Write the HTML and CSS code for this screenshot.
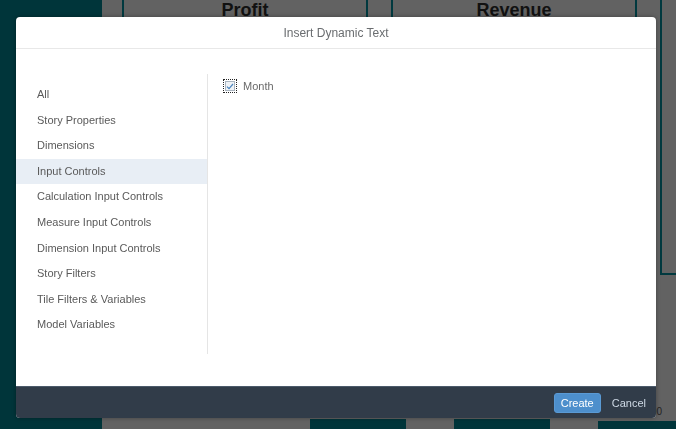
FILE: index.html
```html
<!DOCTYPE html>
<html lang="en">

<head>
  <meta charset="UTF-8">
  <meta name="viewport" content="width=device-width, initial-scale=1.0">
  <title>Insert Dynamic Text</title>
  <link rel="stylesheet" href="styles.css">
</head>

<body>
  <div class="story">
    <div class="side"></div>
    <div class="canvas">
      <div class="tiles-top">
        <div class="tile"><h2>Profit</h2></div>
        <div class="tile"><h2>Revenue</h2></div>
        <div class="tile tile-short"></div>
      </div>
      <div class="axis-row">
        <span class="axis-label">1,000</span>
      </div>
      <div class="tiles-bottom">
        <div class="block"></div>
        <div class="block"></div>
        <div class="block block-wide"></div>
      </div>
    </div>
  </div>

  <div class="dialog">
    <div class="dialog-header">Insert Dynamic Text</div>
    <div class="dialog-body">
      <ul class="nav">
        <li>All</li>
        <li>Story Properties</li>
        <li>Dimensions</li>
        <li class="selected">Input Controls</li>
        <li>Calculation Input Controls</li>
        <li>Measure Input Controls</li>
        <li>Dimension Input Controls</li>
        <li>Story Filters</li>
        <li>Tile Filters &amp; Variables</li>
        <li>Model Variables</li>
      </ul>
      <div class="options">
        <label class="option">
          <span class="focus-ring">
            <span class="check">
              <svg width="8" height="7" viewBox="0 0 8 7">
                <path d="M1 3.6 L3 5.6 L7 1" fill="none" stroke="#4a84bd" stroke-width="1.2" />
              </svg>
            </span>
          </span>
          Month
        </label>
      </div>
    </div>
    <div class="dialog-footer">
      <button class="btn btn-primary">Create</button>
      <button class="btn btn-plain">Cancel</button>
    </div>
  </div>
</body>

</html>
```

FILE: styles.css
```css
* {
  box-sizing: border-box;
  margin: 0;
  padding: 0;
}

body {
  width: 676px;
  height: 429px;
  overflow: hidden;
  background-color: #00353a;
  font-family: "Liberation Sans", Arial, sans-serif;
}

/* background story page */
.story {
  display: flex;
  height: 429px;
}

.side {
  width: 102px;
  flex-shrink: 0;
  background-color: #00353a;
}

.canvas {
  flex: 1;
  display: flex;
  flex-direction: column;
  background-color: #626262;
  overflow: hidden;
}

.tiles-top {
  display: flex;
  gap: 23px;
  padding-left: 20px;
  height: 275px;
  flex-shrink: 0;
}

.tile {
  width: 246px;
  flex-shrink: 0;
  border: 2px solid #00393f;
  border-top: none;
}

.tile h2 {
  font-size: 18px;
  font-weight: bold;
  color: #111;
  text-align: center;
  line-height: 20px;
}

.tile-short {
  width: 40px;
  border-right: none;
}

.axis-row {
  height: 144px;
  display: flex;
  justify-content: flex-end;
  align-items: flex-end;
  padding-right: 14px;
  flex-shrink: 0;
}

.axis-label {
  font-size: 10px;
  color: #222;
  line-height: 12px;
  padding-bottom: 1px;
}

.tiles-bottom {
  display: flex;
  gap: 48px;
  padding-left: 208px;
  flex: 1;
}

.block {
  width: 96px;
  flex-shrink: 0;
  background-color: #00353a;
}

.block-wide {
  width: 90px;
  margin-top: 2px;
}

/* dialog */
.dialog {
  position: fixed;
  left: 16px;
  top: 17px;
  width: 640px;
  height: 401px;
  display: flex;
  flex-direction: column;
  background-color: #fff;
  border-radius: 4px;
  box-shadow: 0 0 4px rgba(0, 0, 0, 0.35);
  overflow: hidden;
}

.dialog-header {
  height: 32px;
  flex-shrink: 0;
  border-bottom: 1px solid #e8e8e8;
  text-align: center;
  line-height: 32px;
  font-size: 12px;
  color: #6a6d70;
}

.dialog-body {
  flex: 1;
  display: flex;
  padding-top: 25px;
}

.nav {
  list-style: none;
  width: 192px;
  height: 280px;
  flex-shrink: 0;
  border-right: 1px solid #e5e5e5;
  padding-top: 8px;
}

.nav li {
  height: 25.6px;
  line-height: 25.6px;
  padding-left: 21px;
  font-size: 11px;
  color: #5a5a5a;
}

.nav li.selected {
  background-color: #e8eef5;
}

.options {
  flex: 1;
  padding: 5px 0 0 15px;
}

.option {
  display: flex;
  align-items: center;
  gap: 6px;
  font-size: 11px;
  color: #6a6a6a;
  line-height: 14px;
  margin-top: -1px;
}

.focus-ring {
  width: 14px;
  height: 14px;
  border: 1px dotted #222;
  display: flex;
  align-items: center;
  justify-content: center;
  margin-top: 1px;
}

.check {
  width: 10px;
  height: 10px;
  border: 1px solid #a9b4bf;
  background-color: #eef2f6;
  display: flex;
  align-items: center;
  justify-content: center;
}

.dialog-footer {
  height: 32px;
  flex-shrink: 0;
  background-color: #313c49;
  border-top: 1px solid #4b5a6a;
  display: flex;
  align-items: center;
  justify-content: flex-end;
  gap: 4px;
  padding-right: 3px;
}

.btn {
  height: 20px;
  padding: 0 6px;
  font-family: "Liberation Sans", Arial, sans-serif;
  font-size: 11px;
  border-radius: 3px;
  border: 1px solid transparent;
  background: none;
}

.btn-primary {
  background-color: #4d8fcc;
  border-color: #5a9ad4;
  color: #fff;
}

.btn-plain {
  color: #cdd8e4;
}
```
